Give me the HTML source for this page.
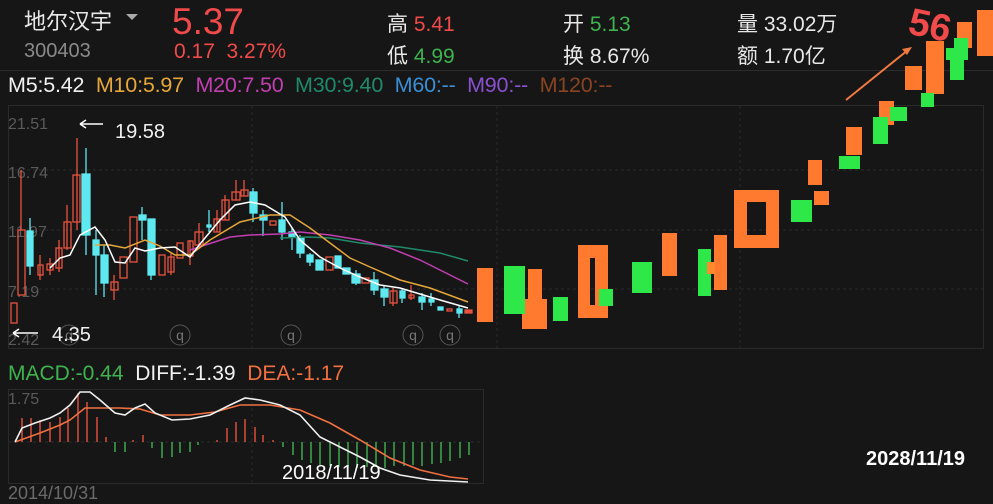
<!DOCTYPE html>
<html><head><meta charset="utf-8"><style>
html,body{margin:0;padding:0;background:#161616;width:993px;height:500px;overflow:hidden;font-family:"Liberation Sans","Noto Sans CJK SC",sans-serif}
.t{position:absolute;white-space:nowrap}
</style></head><body>
<div class="t" style="left:24px;top:4px;font-size:22px;color:#e8e8e8">地尔汉宇</div>
<div class="t" style="left:126px;top:14px;width:0;height:0;border-left:6px solid transparent;border-right:6px solid transparent;border-top:6px solid #aaa"></div>
<div class="t" style="left:24px;top:40px;font-size:20px;color:#8a8a8a">300403</div>
<div class="t" style="left:172px;top:1px;font-size:37px;color:#f04a4a">5.37</div>
<div class="t" style="left:174px;top:40px;font-size:21px;color:#f04a4a">0.17&nbsp;&nbsp;3.27%</div>
<div class="t" style="left:387px;top:8px;font-size:21px;color:#e8e8e8">高 <span style="color:#f04a4a">5.41</span></div>
<div class="t" style="left:387px;top:40px;font-size:21px;color:#e8e8e8">低 <span style="color:#3fb34f">4.99</span></div>
<div class="t" style="left:563px;top:8px;font-size:21px;color:#e8e8e8">开 <span style="color:#3fb34f">5.13</span></div>
<div class="t" style="left:563px;top:40px;font-size:21px;color:#e8e8e8">换 8.67%</div>
<div class="t" style="left:737px;top:8px;font-size:21px;color:#e8e8e8">量 33.02万</div>
<div class="t" style="left:737px;top:40px;font-size:21px;color:#e8e8e8">额 1.70亿</div>
<div class="t" style="left:0;top:70px;width:993px;height:1px;background:#2c2c2c"></div>
<div class="t" style="left:8px;top:73px;font-size:21.5px;letter-spacing:-0.2px"><span style="color:#f0f0f0">M5:5.42</span>&nbsp; <span style="color:#e6a73a">M10:5.97</span>&nbsp; <span style="color:#c13fb0">M20:7.50</span>&nbsp; <span style="color:#1f8a6a">M30:9.40</span>&nbsp; <span style="color:#3a8fd6">M60:--</span>&nbsp; <span style="color:#8a4fd0">M90:--</span>&nbsp; <span style="color:#8a4420">M120:--</span></div>

<svg class="t" style="left:0;top:0" width="993" height="500" viewBox="0 0 993 500">
<g fill="none" stroke="#2a2a2a" stroke-width="1">
<rect x="8.5" y="105.5" width="975" height="243"/>
<rect x="8.5" y="389.5" width="475" height="94"/>
<g stroke-dasharray="3,3">
<line x1="9" y1="170" x2="983" y2="170"/><line x1="9" y1="230" x2="983" y2="230"/><line x1="9" y1="289" x2="983" y2="289"/>
<line x1="252" y1="106" x2="252" y2="348"/><line x1="497" y1="106" x2="497" y2="348"/><line x1="740" y1="106" x2="740" y2="348"/>
<line x1="9" y1="442" x2="483" y2="442"/><line x1="252" y1="390" x2="252" y2="483"/>
</g></g>
<g font-size="16" fill="#5a5a5a" font-family="Liberation Sans">
<text x="8" y="129">21.51</text><text x="8" y="178">16.74</text><text x="8" y="237">11.97</text><text x="8" y="297">7.19</text><text x="8" y="345">2.42</text>
<text x="8" y="404">1.75</text>
</g>
<g stroke-width="1.3">
<g stroke="#e8533f" fill="none">
<rect x="11" y="303" width="6" height="20"/>
<line x1="21" y1="170" x2="21" y2="230"/><rect x="18" y="230" width="7" height="65"/>
<line x1="40" y1="255" x2="40" y2="280"/><rect x="38" y="265" width="5" height="10"/>
<line x1="50" y1="258" x2="50" y2="275"/><rect x="47" y="264" width="6" height="6"/>
<line x1="59" y1="240" x2="59" y2="272"/><rect x="56" y="248" width="6" height="20"/>
<line x1="67" y1="205" x2="67" y2="250"/><rect x="64" y="222" width="7" height="26"/>
<line x1="77" y1="138" x2="77" y2="230"/><rect x="73" y="175" width="7" height="47"/>
<line x1="114" y1="275" x2="114" y2="300"/><rect x="111" y="282" width="7" height="8"/>
<rect x="120" y="257" width="7" height="21"/>
<rect x="130" y="217" width="7" height="45"/>
<rect x="159" y="255" width="6" height="20"/>
<line x1="171" y1="253" x2="171" y2="275"/><rect x="168" y="257" width="6" height="15"/>
<rect x="177" y="243" width="6" height="15"/>
<line x1="190" y1="240" x2="190" y2="265"/><rect x="188" y="241" width="5" height="15"/>
<line x1="199" y1="223" x2="199" y2="245"/><rect x="195" y="232" width="8" height="13"/>
<line x1="217" y1="210" x2="217" y2="232"/><rect x="214" y="219" width="6" height="13"/>
<line x1="225" y1="195" x2="225" y2="220"/><rect x="222" y="200" width="7" height="20"/>
<line x1="236" y1="180" x2="236" y2="200"/><rect x="232" y="192" width="8" height="8"/>
<line x1="244" y1="180" x2="244" y2="196"/><rect x="241" y="190" width="7" height="6"/>
<rect x="270" y="221" width="6" height="4"/>
<rect x="326" y="257" width="7" height="13"/>
<rect x="362" y="278" width="7" height="5"/>
<line x1="393" y1="288" x2="393" y2="306"/><rect x="390" y="291" width="7" height="12"/>
<line x1="411" y1="285" x2="411" y2="300"/><rect x="409" y="295" width="5" height="3"/>
<rect x="447" y="309" width="5" height="2"/>
<rect x="465" y="310" width="7" height="3" fill="#e8533f"/>
</g>
<g stroke="#5ee8f0" fill="#5ee8f0">
<line x1="30" y1="218" x2="30" y2="275"/><rect x="27" y="231" width="6" height="35"/>
<line x1="86" y1="148" x2="86" y2="255"/><rect x="82" y="174" width="8" height="61"/>
<line x1="96" y1="230" x2="96" y2="295"/><rect x="93" y="240" width="6" height="15"/>
<line x1="104" y1="245" x2="104" y2="297"/><rect x="101" y="255" width="7" height="28"/>
<line x1="142" y1="207" x2="142" y2="240"/><rect x="139" y="215" width="7" height="5"/>
<line x1="151" y1="219" x2="151" y2="280"/><rect x="148" y="219" width="7" height="56"/>
<line x1="209" y1="210" x2="209" y2="232"/><rect x="207" y="225" width="4" height="2"/>
<line x1="253" y1="188" x2="253" y2="222"/><rect x="250" y="192" width="7" height="21"/>
<line x1="263" y1="210" x2="263" y2="236"/><rect x="260" y="215" width="7" height="5"/>
<line x1="282" y1="202" x2="282" y2="240"/><rect x="279" y="220" width="6" height="12"/>
<line x1="292" y1="228" x2="292" y2="250"/><rect x="289" y="232" width="6" height="5"/>
<line x1="300" y1="235" x2="300" y2="258"/><rect x="297" y="238" width="7" height="15"/>
<line x1="310" y1="253" x2="310" y2="266"/><rect x="307" y="255" width="6" height="7"/>
<rect x="316" y="260" width="7" height="10"/>
<rect x="335" y="256" width="6" height="12"/>
<rect x="343" y="268" width="7" height="6"/>
<line x1="356" y1="270" x2="356" y2="285"/><rect x="352" y="274" width="8" height="9"/>
<line x1="374" y1="272" x2="374" y2="295"/><rect x="371" y="280" width="7" height="10"/>
<line x1="384" y1="286" x2="384" y2="306"/><rect x="381" y="289" width="7" height="8"/>
<line x1="402" y1="288" x2="402" y2="303"/><rect x="400" y="291" width="5" height="7"/>
<line x1="422" y1="293" x2="422" y2="310"/><rect x="419" y="297" width="6" height="5"/>
<line x1="431" y1="293" x2="431" y2="306"/><rect x="429" y="299" width="5" height="3"/>
<rect x="438" y="307" width="5" height="3"/>
<line x1="459" y1="306" x2="459" y2="318"/><rect x="457" y="309" width="5" height="4"/>
</g></g>
<g fill="none" stroke-width="1.5">
<polyline stroke="#1f8a6a" points="280,238 310,237 330,238 360,243 400,247 440,253 468,261"/>
<polyline stroke="#c13fb0" points="190,250 230,237 250,235 280,234 300,232 330,235 360,240 390,248 420,260 450,275 468,284"/>
<polyline stroke="#e6a73a" points="95,245 110,245 125,248 145,240 160,246 175,255 190,255 210,240 240,222 270,215 290,215 310,228 330,243 350,258 370,267 400,280 430,288 468,302"/>
<polyline stroke="#ffffff" points="50,268 60,258 70,255 80,235 95,227 105,240 115,262 125,263 135,248 145,251 160,248 175,247 190,257 200,244 220,220 235,205 250,202 265,205 285,217 300,240 320,257 340,268 360,277 380,285 400,288 420,294 440,300 468,308"/>
</g>
<g fill="none" stroke="#555" stroke-width="1"><circle cx="69" cy="335" r="10"/><circle cx="180" cy="335" r="10"/><circle cx="291" cy="335" r="10"/><circle cx="413" cy="335" r="10"/><circle cx="450" cy="335" r="10"/></g>
<g fill="#777" font-size="14" text-anchor="middle"><text x="69" y="340">q</text><text x="180" y="340">q</text><text x="291" y="340">q</text><text x="413" y="340">q</text><text x="450" y="340">q</text></g>
<g stroke="#fff" stroke-width="1.5" fill="none"><path d="M80 124H103M80 124l6-4M80 124l6 4"/><path d="M13 333H38M13 333l6-4M13 333l6 4"/></g>
<text x="115" y="138" fill="#f0f0f0" font-size="20">19.58</text>
<text x="52" y="341" fill="#f0f0f0" font-size="20">4.35</text>
<g fill="#ff7a2e">
<rect x="477" y="268" width="16" height="54"/>
<rect x="528" y="269" width="14" height="31"/><rect x="522" y="299" width="25" height="30"/>
<path d="M578 245h30v73h-30zM590 258v47h5v-47z" fill-rule="evenodd"/>
<rect x="662" y="233" width="15" height="43"/>
<rect x="714" y="235" width="13" height="55"/>
<path d="M734 190h45v58h-45zM747 202v33h19v-33z" fill-rule="evenodd"/>
<rect x="814" y="191" width="15" height="14"/>
<rect x="808" y="160" width="14" height="25"/>
<rect x="846" y="127" width="16" height="28"/>
<rect x="879" y="101" width="15" height="24"/>
<rect x="905" y="66" width="17" height="24"/>
<rect x="926" y="41" width="18" height="53"/>
<rect x="957" y="22" width="15" height="26"/>
<rect x="977" y="10" width="16" height="46"/>
</g>
<g fill="#2ee84a">
<rect x="504" y="266" width="21" height="48"/>
<rect x="553" y="297" width="15" height="24"/>
<rect x="599" y="289" width="14" height="17"/>
<rect x="632" y="262" width="20" height="31"/>
<rect x="698" y="249" width="13" height="47"/>
<rect x="791" y="200" width="21" height="22"/>
<rect x="839" y="156" width="21" height="13"/>
<rect x="873" y="117" width="15" height="27"/>
<rect x="890" y="107" width="17" height="14"/>
<rect x="921" y="93" width="13" height="14"/>
<path d="M946 48h8v-10h14v22h-4v20h-14v-20h-4z"/>
</g>
<rect x="707" y="262" width="8" height="12" fill="#ff8a2e"/>
<line x1="846" y1="100" x2="908" y2="50" stroke="#f07a40" stroke-width="2"/>
<path d="M912 47l-10 2 5 6z" fill="#f07a40"/>
<text x="909" y="38" fill="#f04a4a" font-size="38" font-weight="bold" transform="rotate(12 930 25)">56</text>
<g stroke-width="1.4">
<g stroke="#e8533f">
<line x1="22" y1="442" x2="22" y2="418"/><line x1="31" y1="442" x2="31" y2="418"/><line x1="40" y1="442" x2="40" y2="420"/><line x1="50" y1="442" x2="50" y2="422"/><line x1="60" y1="442" x2="60" y2="417"/><line x1="68" y1="442" x2="68" y2="408"/><line x1="78" y1="442" x2="78" y2="393"/><line x1="87" y1="442" x2="87" y2="402"/><line x1="97" y1="442" x2="97" y2="417"/><line x1="106" y1="442" x2="106" y2="437"/><line x1="133" y1="442" x2="133" y2="440"/><line x1="143" y1="442" x2="143" y2="435"/>
<line x1="217" y1="442" x2="217" y2="440"/><line x1="227" y1="442" x2="227" y2="428"/><line x1="236" y1="442" x2="236" y2="422"/><line x1="245" y1="442" x2="245" y2="419"/><line x1="255" y1="442" x2="255" y2="427"/><line x1="263" y1="442" x2="263" y2="435"/><line x1="273" y1="442" x2="273" y2="440"/>
</g>
<g stroke="#3fb34f">
<line x1="115" y1="442" x2="115" y2="452"/><line x1="125" y1="442" x2="125" y2="452"/><line x1="152" y1="442" x2="152" y2="448"/><line x1="162" y1="442" x2="162" y2="458"/><line x1="172" y1="442" x2="172" y2="457"/><line x1="180" y1="442" x2="180" y2="453"/><line x1="190" y1="442" x2="190" y2="452"/><line x1="198" y1="442" x2="198" y2="445"/>
<line x1="283" y1="442" x2="283" y2="447"/><line x1="293" y1="442" x2="293" y2="455"/><line x1="302" y1="442" x2="302" y2="460"/><line x1="311" y1="442" x2="311" y2="463"/><line x1="320" y1="442" x2="320" y2="465"/><line x1="330" y1="442" x2="330" y2="466"/><line x1="339" y1="442" x2="339" y2="467"/><line x1="348" y1="442" x2="348" y2="467"/><line x1="357" y1="442" x2="357" y2="468"/><line x1="367" y1="442" x2="367" y2="467"/><line x1="376" y1="442" x2="376" y2="467"/><line x1="385" y1="442" x2="385" y2="468"/><line x1="394" y1="442" x2="394" y2="466"/><line x1="404" y1="442" x2="404" y2="466"/><line x1="413" y1="442" x2="413" y2="465"/><line x1="422" y1="442" x2="422" y2="466"/><line x1="432" y1="442" x2="432" y2="464"/><line x1="441" y1="442" x2="441" y2="463"/><line x1="450" y1="442" x2="450" y2="461"/><line x1="460" y1="442" x2="460" y2="458"/><line x1="469" y1="442" x2="469" y2="455"/>
</g></g>
<g fill="none" stroke-width="1.6">
<polyline stroke="#f07040" points="15,442 40,433 60,425 70,420 85,408 100,408 120,408 140,409 160,415 190,415 215,412 240,405 270,405 300,410 330,423 360,440 390,458 420,470 450,477 468,479"/>
<polyline stroke="#f0f0f0" points="15,442 22,428 35,423 50,418 60,413 70,405 80,392 90,392 100,400 115,413 125,415 135,408 145,404 155,413 172,420 190,419 210,415 230,405 245,398 260,400 280,405 300,415 320,437 340,447 360,457 380,468 400,475 430,480 468,482"/>
</g>
</svg>
<div class="t" style="left:8px;top:362px;font-size:21px"><span style="color:#3fb34f">MACD:-0.44</span>&nbsp; <span style="color:#f0f0f0">DIFF:-1.39</span>&nbsp; <span style="color:#f07040">DEA:-1.17</span></div>
<div class="t" style="left:282px;top:462px;font-size:20px;color:#fff">2018/11/19</div>
<div class="t" style="left:8px;top:483px;font-size:18px;color:#6a6a6a">2014/10/31</div>
<div class="t" style="left:866px;top:448px;font-size:20px;color:#fff;font-weight:bold">2028/11/19</div>
</body></html>
